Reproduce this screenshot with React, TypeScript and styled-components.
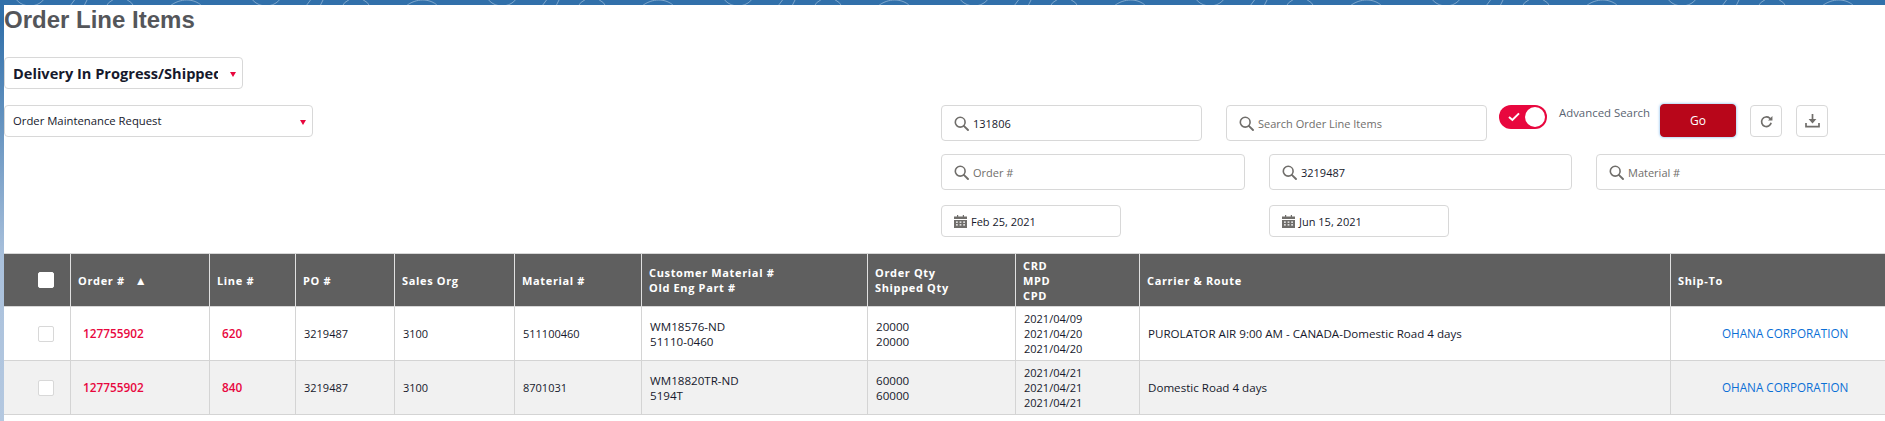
import React from 'react';
import styled, { createGlobalStyle } from 'styled-components';

const GlobalStyle = createGlobalStyle`
  html, body {
    margin: 0;
    padding: 0;
    background: #ffffff;
  }
  body {
    font-family: "Open Sans", "Noto Sans", sans-serif;
    overflow: hidden;
  }
`;

const Shell = styled.div`
  position: relative;
  width: 1885px;
  height: 421px;
  padding: 5px 0 0 4px;
  box-sizing: border-box;
  overflow: hidden;
  background: linear-gradient(to bottom, #3170aa 0, #3170aa 20px, #aac1dc 260px, #b4c8e0 421px);
`;

const BannerArt = styled.svg`
  position: absolute;
  top: 0;
  left: 0;
`;

const Page = styled.div`
  position: relative;
  background: #ffffff;
  height: 416px;
  overflow: hidden;
`;

const Title = styled.h1`
  margin: 0;
  height: 52px;
  padding: 1px 0 0 0;
  box-sizing: border-box;
  font-family: "Liberation Sans", Arial, sans-serif;
  font-size: 24px;
  line-height: 28px;
  font-weight: 700;
  color: #54565a;
`;

const SelectBox = styled.div<{ $width: number; $bold?: boolean }>`
  position: relative;
  width: ${({ $width }) => $width}px;
  height: 32px;
  box-sizing: border-box;
  border: 1px solid #d8d8d8;
  border-radius: 4px;
  padding: 0 24px ${({ $bold }) => ($bold ? 0 : 2)}px 8px;
  display: flex;
  align-items: center;
  background: #fff;
  font-size: ${({ $bold }) => ($bold ? 14.6 : 11.3)}px;
  font-weight: ${({ $bold }) => ($bold ? 700 : 400)};
  color: #16192c;
  white-space: nowrap;
`;

const SelectText = styled.span`
  display: block;
  overflow: hidden;
`;

const Caret = styled.span`
  position: absolute;
  right: 6px;
  top: 14px;
  border-left: 3px solid transparent;
  border-right: 3px solid transparent;
  border-top: 5px solid #e8073e;
`;

const FilterArea = styled.div`
  display: flex;
  height: 149px;
  margin-top: 15px;
`;

const LeftColumn = styled.div`
  width: 937px;
  padding-top: 1px;
  flex: none;
`;

const RightColumn = styled.div`
  display: flex;
  flex-direction: column;
  flex: none;
`;

const FilterRow = styled.div<{ $height: number; $gap?: number }>`
  display: flex;
  align-items: flex-start;
  gap: ${({ $gap }) => $gap ?? 24}px;
  height: ${({ $height }) => $height}px;
`;

const Field = styled.div<{ $width: number; $height?: number; $placeholder?: boolean }>`
  flex: none;
  width: ${({ $width }) => $width}px;
  height: ${({ $height }) => $height ?? 36}px;
  margin-top: 1px;
  box-sizing: border-box;
  border: 1px solid #d8d8d8;
  border-radius: 4px;
  display: flex;
  align-items: center;
  gap: 4px;
  padding-left: 12px;
  font-size: 11px;
  color: ${({ $placeholder }) => ($placeholder ? '#706e6b' : '#16192c')};
`;

const Toggle = styled.div`
  position: relative;
  flex: none;
  width: 48px;
  height: 24px;
  margin: 1px 0 0 -12px;
  border-radius: 12px;
  background: #e8073e;
`;

const Knob = styled.span`
  position: absolute;
  top: 2px;
  right: 2px;
  width: 20px;
  height: 20px;
  border-radius: 50%;
  background: #fff;
`;

const ToggleCheck = styled.svg`
  position: absolute;
  left: 9px;
  top: 7px;
`;

const AdvancedLabel = styled.span`
  flex: none;
  width: 91px;
  margin: 1px -14px 0 -12px;
  font-size: 11.4px;
  line-height: 15px;
  color: #5a6472;
  white-space: nowrap;
`;

const GoButton = styled.button`
  flex: none;
  width: 76px;
  height: 33px;
  border: 1px solid #b8061a;
  border-radius: 4px;
  background: #b8061a;
  color: #fff;
  font: 400 12px "Open Sans", sans-serif;
  box-shadow: 0 0 3px #6fb1ea;
`;

const IconButton = styled.button`
  flex: none;
  width: 32px;
  height: 32px;
  margin: 1px 0 0 -10px;
  padding: 0;
  border: 1px solid #d8d8d8;
  border-radius: 4px;
  background: #fff;
  display: flex;
  align-items: center;
  justify-content: center;
`;

const Table = styled.div`
  display: grid;
  grid-template-columns: 66px 139px 86px 99px 120px 127px 226px 148px 124px 531px 1fr;
  width: 1881px;
  border-top: 1px solid #d8d8d8;
`;

const HeadCell = styled.div`
  background: #5f5f5f;
  height: 53px;
  padding-left: 7px;
  box-sizing: border-box;
  border-left: 1px solid #e0e0e0;
  border-bottom: 1px solid #d8d8d8;
  display: flex;
  flex-direction: column;
  justify-content: center;
  color: #fff;
  font-size: 11px;
  font-weight: 700;
  line-height: 15px;
  letter-spacing: 0.65px;
  white-space: nowrap;
  &:first-child {
    border-left: none;
    padding-left: 34px;
  }
`;

const SortMark = styled.span`
  margin-left: 10px;
  font-size: 12px;
`;

const Cell = styled.div<{ $stripe?: boolean }>`
  background: ${({ $stripe }) => ($stripe ? '#f1f1f1' : '#fff')};
  height: 54px;
  padding-left: 8px;
  box-sizing: border-box;
  border-left: 1px solid #d4d4d4;
  border-bottom: 1px solid #d4d4d4;
  display: flex;
  flex-direction: column;
  justify-content: center;
  font-size: 11px;
  line-height: 15px;
  color: #16192c;
  white-space: nowrap;
`;

const CheckCell = styled(Cell)`
  border-left: none;
  padding-left: 34px;
`;

const CheckBox = styled.span<{ $head?: boolean }>`
  display: block;
  width: 16px;
  height: 16px;
  box-sizing: border-box;
  background: #fff;
  border: 1px solid ${({ $head }) => ($head ? '#fff' : '#d8d8d8')};
  border-radius: 2px;
`;

const RedLink = styled.span`
  padding-left: 4px;
  color: #e8073e;
  font-size: 11.8px;
  font-weight: 600;
`;

const WideText = styled.div`
  font-size: 11.6px;
`;

const BlueLink = styled.span`
  padding-left: 43px;
  color: #0a6fd6;
  font-size: 11.7px;
`;

function SearchIcon() {
  return (
    <svg width="15" height="15" viewBox="0 0 15 15" fill="none" stroke="#706e6b" strokeWidth="1.6">
      <circle cx="6.2" cy="6.2" r="4.9" />
      <path d="M9.8 9.8 14 14" strokeLinecap="round" strokeWidth="1.9" />
    </svg>
  );
}

function CalendarIcon() {
  return (
    <svg width="13" height="14" viewBox="0 0 13 14" fill="#706e6b">
      <path d="M3 1h1.2v1.6H8.8V1H10v1.6h3V5H0V2.6h3zM0 6h13v8H0zm2 1.4v1.4h1.8V7.4zm3.6 0v1.4h1.8V7.4zm3.6 0v1.4H11V7.4zM2 10.2v1.4h1.8v-1.4zm3.6 0v1.4h1.8v-1.4zm3.6 0v1.4H11v-1.4z" fillRule="evenodd" />
    </svg>
  );
}

function RefreshIcon() {
  return (
    <svg width="13" height="13" viewBox="0 0 14 14" fill="none" stroke="#706e6b" strokeWidth="1.8">
      <path d="M12 8.4A5.2 5.2 0 1 1 10.4 3.4L12.2 5" />
      <path d="M13.4 1v5H8.6z" fill="#706e6b" stroke="none" />
    </svg>
  );
}

function DownloadIcon() {
  return (
    <svg width="15" height="14" viewBox="0 0 15 14" fill="none" stroke="#706e6b" strokeWidth="1.7">
      <path d="M7.5 0v8" />
      <path d="M3.6 5h7.8L7.5 9.6z" fill="#706e6b" stroke="none" />
      <path d="M1 9v3.6h13V9" />
    </svg>
  );
}

const rows = [
  {
    line: '620',
    material: '511100460',
    customer: ['WM18576-ND', '51110-0460'],
    qty: ['20000', '20000'],
    dates: ['2021/04/09', '2021/04/20', '2021/04/20'],
    route: 'PUROLATOR AIR 9:00 AM - CANADA-Domestic Road 4 days',
  },
  {
    line: '840',
    material: '8701031',
    customer: ['WM18820TR-ND', '5194T'],
    qty: ['60000', '60000'],
    dates: ['2021/04/21', '2021/04/21', '2021/04/21'],
    route: 'Domestic Road 4 days',
  },
];

const Lines = ({ items, wide }: { items: string[]; wide?: boolean }) => (
  <>
    {items.map((text, i) => (wide ? <WideText key={i}>{text}</WideText> : <div key={i}>{text}</div>))}
  </>
);

export default function App() {
  return (
    <Shell>
      <GlobalStyle />
      <BannerArt width="1885" height="40" fill="none" stroke="#7ea6cb" strokeWidth="1">
        <defs>
          <pattern id="swirl" width="236" height="40" patternUnits="userSpaceOnUse">
            <circle cx="30" cy="-12" r="18" />
            <circle cx="120" cy="14" r="16" />
            <path d="M170 6c10-8 24-8 32 0M70 6l6-8M84 6l4-8" />
          </pattern>
        </defs>
        <rect width="1885" height="40" fill="url(#swirl)" stroke="none" />
      </BannerArt>
      <Page>
        <Title>Order Line Items</Title>
        <SelectBox $width={239} $bold>
          <SelectText>Delivery In Progress/Shipped</SelectText>
          <Caret />
        </SelectBox>
        <FilterArea>
          <LeftColumn>
            <SelectBox $width={309}>
              <SelectText>Order Maintenance Request</SelectText>
              <Caret />
            </SelectBox>
          </LeftColumn>
          <RightColumn>
            <FilterRow $height={49}>
              <Field $width={261}>
                <SearchIcon />
                131806
              </Field>
              <Field $width={261} $placeholder>
                <SearchIcon />
                Search Order Line Items
              </Field>
              <Toggle>
                <ToggleCheck width="12" height="10" viewBox="0 0 12 10" fill="none" stroke="#fff" strokeWidth="2">
                  <path d="M1 5l3.4 3L11 1.4" />
                </ToggleCheck>
                <Knob />
              </Toggle>
              <AdvancedLabel>Advanced Search</AdvancedLabel>
              <GoButton>Go</GoButton>
              <IconButton>
                <RefreshIcon />
              </IconButton>
              <IconButton>
                <DownloadIcon />
              </IconButton>
            </FilterRow>
            <FilterRow $height={51}>
              <Field $width={304} $placeholder>
                <SearchIcon />
                Order #
              </Field>
              <Field $width={303}>
                <SearchIcon />
                3219487
              </Field>
              <Field $width={304} $placeholder>
                <SearchIcon />
                Material #
              </Field>
            </FilterRow>
            <FilterRow $height={49} $gap={148}>
              <Field $width={180} $height={32}>
                <CalendarIcon />
                Feb 25, 2021
              </Field>
              <Field $width={180} $height={32}>
                <CalendarIcon />
                Jun 15, 2021
              </Field>
            </FilterRow>
          </RightColumn>
        </FilterArea>
        <Table>
          <HeadCell>
            <CheckBox $head />
          </HeadCell>
          <HeadCell>
            <div>
              Order #<SortMark>▲</SortMark>
            </div>
          </HeadCell>
          <HeadCell>Line #</HeadCell>
          <HeadCell>PO #</HeadCell>
          <HeadCell>Sales Org</HeadCell>
          <HeadCell>Material #</HeadCell>
          <HeadCell>
            <div>Customer Material #</div>
            <div>Old Eng Part #</div>
          </HeadCell>
          <HeadCell>
            <div>Order Qty</div>
            <div>Shipped Qty</div>
          </HeadCell>
          <HeadCell>
            <div>CRD</div>
            <div>MPD</div>
            <div>CPD</div>
          </HeadCell>
          <HeadCell>Carrier &amp; Route</HeadCell>
          <HeadCell>Ship-To</HeadCell>
          {rows.map((row, i) => {
            const stripe = i % 2 === 1;
            return (
              <React.Fragment key={row.line}>
                <CheckCell $stripe={stripe}>
                  <CheckBox />
                </CheckCell>
                <Cell $stripe={stripe}>
                  <RedLink>127755902</RedLink>
                </Cell>
                <Cell $stripe={stripe}>
                  <RedLink>{row.line}</RedLink>
                </Cell>
                <Cell $stripe={stripe}>3219487</Cell>
                <Cell $stripe={stripe}>3100</Cell>
                <Cell $stripe={stripe}>{row.material}</Cell>
                <Cell $stripe={stripe}>
                  <Lines items={row.customer} wide />
                </Cell>
                <Cell $stripe={stripe}>
                  <Lines items={row.qty} wide />
                </Cell>
                <Cell $stripe={stripe}>
                  <Lines items={row.dates} />
                </Cell>
                <Cell $stripe={stripe}>
                  <WideText>{row.route}</WideText>
                </Cell>
                <Cell $stripe={stripe}>
                  <BlueLink>OHANA CORPORATION</BlueLink>
                </Cell>
              </React.Fragment>
            );
          })}
        </Table>
      </Page>
    </Shell>
  );
}
